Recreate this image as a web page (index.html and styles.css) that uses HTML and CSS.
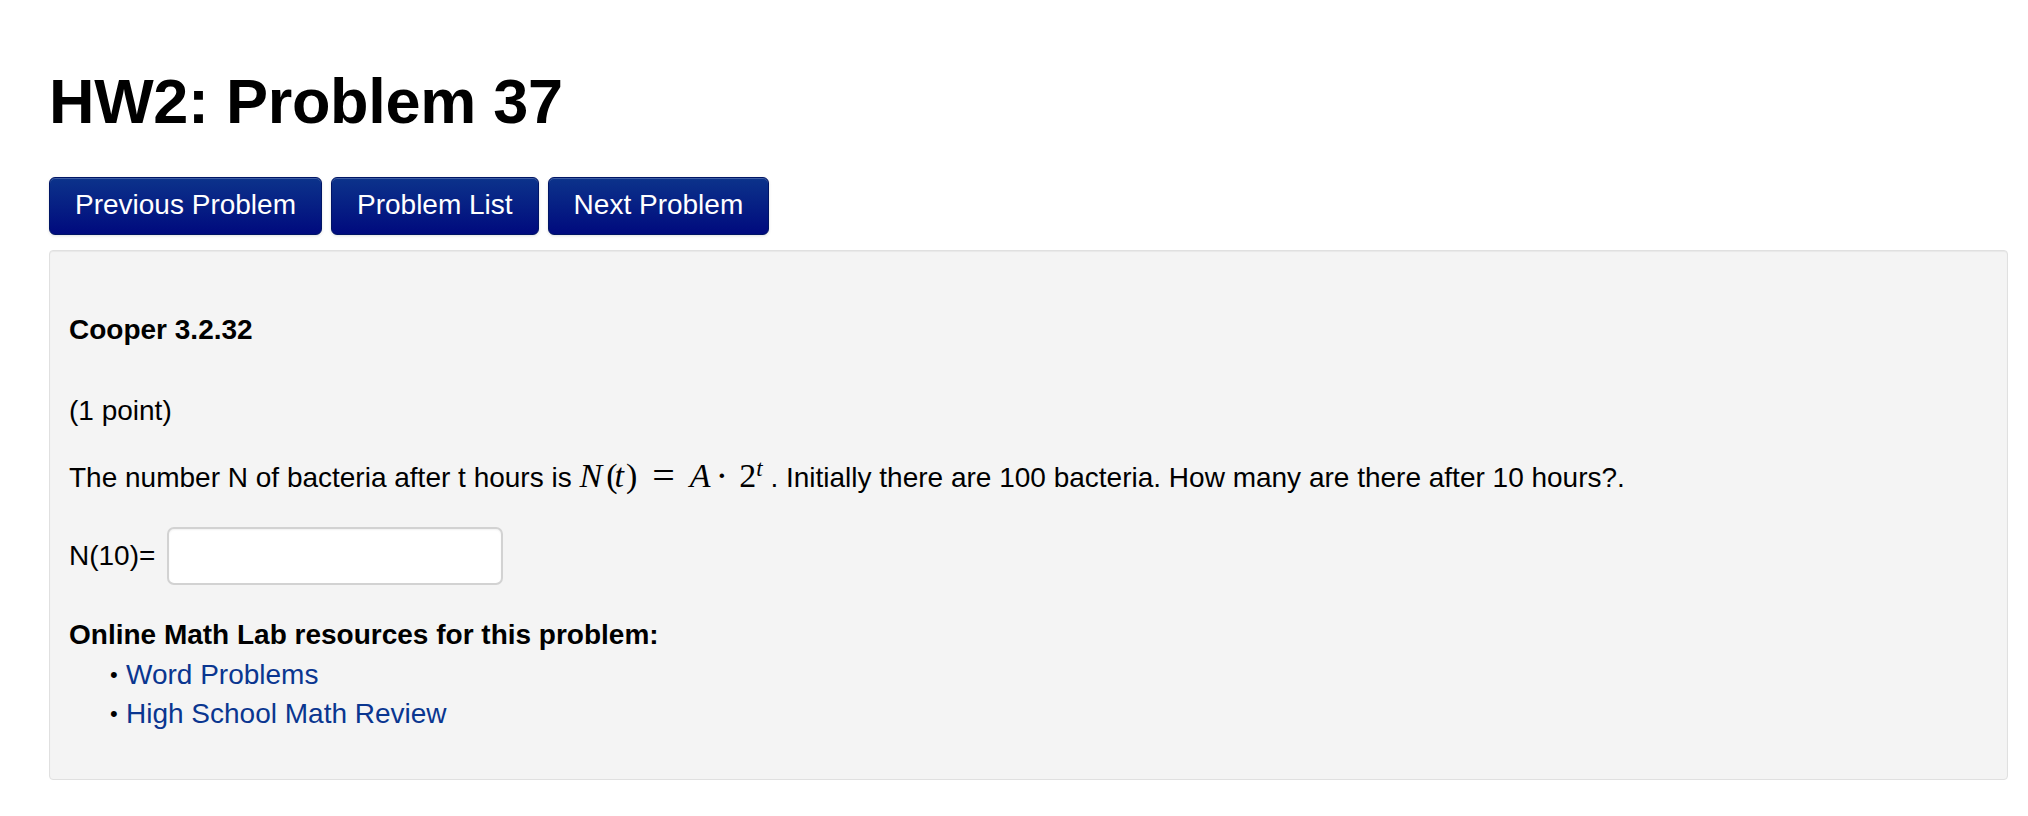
FILE: index.html
```html
<!DOCTYPE html>
<html lang="en">
<head>
<meta charset="utf-8">
<title>HW2: Problem 37</title>
<link rel="stylesheet" href="styles.css">
</head>
<body>
<div class="page">
  <h1 class="title">HW2: Problem 37</h1>
  <nav class="nav">
    <a class="btn" href="#">Previous Problem</a>
    <a class="btn" href="#">Problem List</a>
    <a class="btn" href="#">Next Problem</a>
  </nav>
  <div class="well">
    <div class="set-title">Cooper 3.2.32</div>
    <p class="points">(1 point)</p>
    <p class="question">The number N of bacteria after t hours is <span class="math"><i class="m-n">N</i><span class="m-lp">(</span><i class="m-t">t</i><span class="m-rp">)</span><span class="m-eq">=</span><i class="m-a">A</i><span class="m-dot">·</span><span class="m-two">2</span><i class="m-sup">t</i></span> . Initially there are 100 bacteria. How many are there after 10 hours?.</p>
    <div class="answer-row">
      <label class="answer-label" for="ans">N(10)=</label>
      <input class="answer" id="ans" type="text">
    </div>
    <div class="resources">
      <div class="resources-title">Online Math Lab resources for this problem:</div>
      <ul class="resource-list">
        <li><a href="#">Word Problems</a></li>
        <li><a href="#">High School Math Review</a></li>
      </ul>
    </div>
  </div>
</div>
</body>
</html>
```

FILE: styles.css
```css
html, body {
  margin: 0;
  padding: 0;
  background: #ffffff;
}

body {
  font-family: "Liberation Sans", Helvetica, Arial, sans-serif;
  font-size: 28px;
  line-height: 40px;
  color: #000;
}

.page {
  padding: 0 20px 0 49px;
}

.title {
  margin: 63px 0 0;
  font-size: 63px;
  line-height: 76px;
  font-weight: bold;
  letter-spacing: -0.3px;
  color: #000;
}

.nav {
  display: flex;
  gap: 9px;
  margin-top: 38px;
}

.btn {
  display: block;
  padding: 7px 25px 9px;
  border: 1px solid #001565;
  border-radius: 6px;
  background: linear-gradient(to bottom, #0c338b 0%, #061f84 50%, #000a7e 100%);
  box-shadow: inset 0 1px 0 rgba(255, 255, 255, 0.22), 0 1px 3px rgba(0, 0, 0, 0.12);
  color: #ffffff;
  text-decoration: none;
  font-size: 28px;
  line-height: 40px;
}

.well {
  margin-top: 15px;
  padding: 19px;
  background: #f4f4f4;
  border: 1px solid #e0e0e0;
  border-radius: 4px;
  box-shadow: inset 0 1px 1px rgba(0, 0, 0, 0.05);
}

.set-title {
  margin-top: 40px;
  font-weight: bold;
}

.points {
  margin: 41px 0 0;
}

.question {
  margin: 27px 0 0;
}

.math {
  font-family: "Liberation Serif", "Times New Roman", serif;
  font-size: 34px;
  line-height: 1;
  white-space: nowrap;
}

.math i {
  font-style: italic;
}

.m-n { margin-right: 4px; }
.m-t { margin-left: -3px; }
.m-rp { margin-left: 2px; }

.m-eq {
  margin-left: 15px;
  font-size: 40px;
  line-height: 0;
  vertical-align: -2px;
}

.m-a { margin-left: 15px; }

.m-dot {
  margin-left: 5px;
  font-size: 38px;
  line-height: 0;
  vertical-align: -1px;
}

.m-two { margin-left: 11px; }

.m-sup {
  font-size: 23px;
  line-height: 0;
  vertical-align: 11px;
}

.answer-row {
  display: flex;
  align-items: center;
  margin-top: 29px;
}

.answer-label {
  line-height: 40px;
}

.answer {
  box-sizing: border-box;
  width: 336px;
  height: 58px;
  margin: 0 0 0 12px;
  padding: 6px 12px;
  border: 2px solid #d2d2d2;
  border-radius: 7px;
  background: #ffffff;
  box-shadow: inset 0 1px 2px rgba(0, 0, 0, 0.06);
  font-family: "Liberation Sans", Helvetica, Arial, sans-serif;
  font-size: 28px;
}

.resources {
  margin-top: 30px;
  margin-bottom: 27px;
}

.resources-title {
  font-weight: bold;
}

.resource-list {
  margin: 0;
  padding-left: 57px;
  list-style: none;
}

.resource-list li {
  line-height: 39px;
}

.resource-list li::before {
  content: "•";
  display: inline-block;
  width: 16px;
  margin-left: -16px;
  font-size: 22px;
  vertical-align: 2px;
  color: #000;
}

.resource-list a {
  color: #0a3690;
  text-decoration: none;
}
```
